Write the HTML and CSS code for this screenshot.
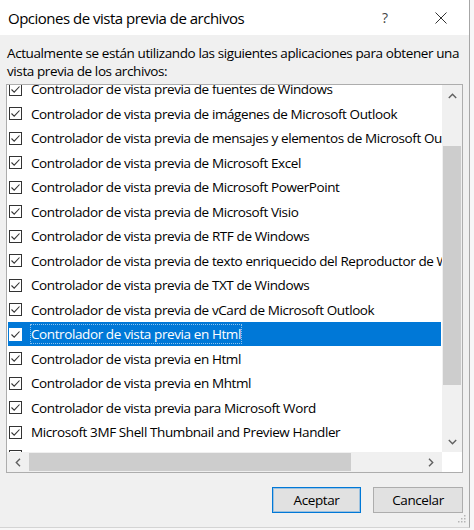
FILE: index.html
```
<!DOCTYPE html>
<html lang="es">
<head>
<meta charset="utf-8">
<title>Opciones de vista previa de archivos</title>
<link rel="stylesheet" href="styles.css">
</head>
<body>
<div class="dialog">
  <div class="titlebar">
    <div class="title">Opciones de vista previa de archivos</div>
    <div class="tb-btn help">?</div>
    <div class="tb-btn close">
      <svg width="12" height="12" viewBox="0 0 12 12"><path d="M0.5 0.5 L11.5 11.5 M11.5 0.5 L0.5 11.5" stroke="#333" stroke-width="1" fill="none"/></svg>
    </div>
  </div>
  <div class="desc">Actualmente se están utilizando las siguientes aplicaciones para obtener una vista previa de los archivos:</div>
  <div class="listbox">
    <div class="viewport">
      <div class="rows">
        <div class="row"><span class="cb"><svg viewBox="0 0 11 11"><path d="M1.5 5.5 L4.2 8.2 L9.5 2.5"/></svg></span><span class="label">Controlador de vista previa de fuentes de Windows</span></div>
        <div class="row"><span class="cb"><svg viewBox="0 0 11 11"><path d="M1.5 5.5 L4.2 8.2 L9.5 2.5"/></svg></span><span class="label">Controlador de vista previa de imágenes de Microsoft Outlook</span></div>
        <div class="row"><span class="cb"><svg viewBox="0 0 11 11"><path d="M1.5 5.5 L4.2 8.2 L9.5 2.5"/></svg></span><span class="label">Controlador de vista previa de mensajes y elementos de Microsoft Outlook</span></div>
        <div class="row"><span class="cb"><svg viewBox="0 0 11 11"><path d="M1.5 5.5 L4.2 8.2 L9.5 2.5"/></svg></span><span class="label">Controlador de vista previa de Microsoft Excel</span></div>
        <div class="row"><span class="cb"><svg viewBox="0 0 11 11"><path d="M1.5 5.5 L4.2 8.2 L9.5 2.5"/></svg></span><span class="label">Controlador de vista previa de Microsoft PowerPoint</span></div>
        <div class="row"><span class="cb"><svg viewBox="0 0 11 11"><path d="M1.5 5.5 L4.2 8.2 L9.5 2.5"/></svg></span><span class="label">Controlador de vista previa de Microsoft Visio</span></div>
        <div class="row"><span class="cb"><svg viewBox="0 0 11 11"><path d="M1.5 5.5 L4.2 8.2 L9.5 2.5"/></svg></span><span class="label">Controlador de vista previa de RTF de Windows</span></div>
        <div class="row"><span class="cb"><svg viewBox="0 0 11 11"><path d="M1.5 5.5 L4.2 8.2 L9.5 2.5"/></svg></span><span class="label">Controlador de vista previa de texto enriquecido del Reproductor de Windows Media</span></div>
        <div class="row"><span class="cb"><svg viewBox="0 0 11 11"><path d="M1.5 5.5 L4.2 8.2 L9.5 2.5"/></svg></span><span class="label">Controlador de vista previa de TXT de Windows</span></div>
        <div class="row"><span class="cb"><svg viewBox="0 0 11 11"><path d="M1.5 5.5 L4.2 8.2 L9.5 2.5"/></svg></span><span class="label">Controlador de vista previa de vCard de Microsoft Outlook</span></div>
        <div class="row selected"><span class="cb"><svg viewBox="0 0 11 11"><path d="M1.5 5.5 L4.2 8.2 L9.5 2.5"/></svg></span><span class="label">Controlador de vista previa en Html</span></div>
        <div class="row"><span class="cb"><svg viewBox="0 0 11 11"><path d="M1.5 5.5 L4.2 8.2 L9.5 2.5"/></svg></span><span class="label">Controlador de vista previa en Html</span></div>
        <div class="row"><span class="cb"><svg viewBox="0 0 11 11"><path d="M1.5 5.5 L4.2 8.2 L9.5 2.5"/></svg></span><span class="label">Controlador de vista previa en Mhtml</span></div>
        <div class="row"><span class="cb"><svg viewBox="0 0 11 11"><path d="M1.5 5.5 L4.2 8.2 L9.5 2.5"/></svg></span><span class="label">Controlador de vista previa para Microsoft Word</span></div>
        <div class="row"><span class="cb"><svg viewBox="0 0 11 11"><path d="M1.5 5.5 L4.2 8.2 L9.5 2.5"/></svg></span><span class="label">Microsoft 3MF Shell Thumbnail and Preview Handler</span></div>
        <div class="row"><span class="cb"><svg viewBox="0 0 11 11"><path d="M1.5 5.5 L4.2 8.2 L9.5 2.5"/></svg></span><span class="label">Microsoft Windows TXT Preview Handler</span></div>
      </div>
    </div>
    <div class="vscroll">
      <div class="sb-btn v"><svg width="9" height="6" viewBox="0 0 9 6"><path d="M0.8 5 L4.5 1.3 L8.2 5" class="chev"/></svg></div>
      <div class="vtrack"><div class="vthumb"></div></div>
      <div class="sb-btn v"><svg width="9" height="6" viewBox="0 0 9 6"><path d="M0.8 1 L4.5 4.7 L8.2 1" class="chev"/></svg></div>
    </div>
    <div class="hscroll">
      <div class="sb-btn h"><svg width="6" height="9" viewBox="0 0 6 9"><path d="M5 0.8 L1.3 4.5 L5 8.2" class="chev"/></svg></div>
      <div class="htrack"><div class="hthumb"></div></div>
      <div class="sb-btn h"><svg width="6" height="9" viewBox="0 0 6 9"><path d="M1 0.8 L4.7 4.5 L1 8.2" class="chev"/></svg></div>
    </div>
    <div class="corner"></div>
  </div>
  <div class="footer">
    <div class="btn default">Aceptar</div>
    <div class="btn">Cancelar</div>
  </div>
  <svg class="grip" width="8" height="8" viewBox="0 0 8 8">
    <rect x="6" y="0" width="1.5" height="1.5"/>
    <rect x="3" y="3" width="1.5" height="1.5"/><rect x="6" y="3" width="1.5" height="1.5"/>
    <rect x="0" y="6" width="1.5" height="1.5"/><rect x="3" y="6" width="1.5" height="1.5"/><rect x="6" y="6" width="1.5" height="1.5"/>
  </svg>
</div>
</body>
</html>
```
FILE: styles.css
```
* { box-sizing: border-box; }
html, body { margin: 0; padding: 0; }
body {
  width: 474px;
  height: 530px;
  overflow: hidden;
  background: #f7f7f7;
  font-family: "Open Sans", "Noto Sans", sans-serif;
  color: #000;
}
.dialog {
  position: relative;
  width: 470px;
  height: 528px;
  background: #f0f0f0;
  border-right: 1px solid #a6a6a6;
  border-bottom: 1px solid #d4d4d4;
  display: flex;
  flex-direction: column;
}
.titlebar {
  height: 35px;
  background: #fff;
  display: flex;
  align-items: center;
  padding-left: 8px;
  padding-right: 5px;
}
.title {
  flex: 1;
  font-size: 15px;
  letter-spacing: -0.5px;
}
.tb-btn {
  width: 46px;
  height: 35px;
  display: flex;
  align-items: center;
  justify-content: center;
}
.help {
  margin-right: 10px;
  font-size: 14px;
  color: #444;
}
.desc {
  margin-top: 9px;
  padding: 0 2px 0 7px;
  font-size: 13.5px;
  line-height: 18px;
  letter-spacing: -0.4px;
}
.listbox {
  margin-top: 4px;
  margin-left: 6px;
  width: 457px;
  height: 389px;
  border: 1px solid #adadad;
  background: #fff;
  display: grid;
  grid-template-columns: 435px 20px;
  grid-template-rows: 367px 20px;
}
.viewport {
  overflow: hidden;
  position: relative;
}
.rows {
  margin-top: -8.25px;
}
.row {
  height: 24.5px;
  margin: 0 1px;
  padding-left: 1px;
  display: flex;
  align-items: center;
  white-space: nowrap;
  font-size: 13.5px;
  letter-spacing: -0.4px;
}
.cb {
  flex: none;
  width: 13px;
  height: 13px;
  border: 1px solid #333;
  background: #fff;
  display: flex;
  align-items: center;
  justify-content: center;
  margin-right: 8px;
}
.cb svg {
  width: 11px;
  height: 11px;
}
.cb path {
  fill: none;
  stroke: #333;
  stroke-width: 1.1;
}
.label {
  padding: 0 1px;
  line-height: 20px;
}
.row.selected {
  background: #0078d7;
  color: #fff;
}
.row.selected .cb {
  border-color: #fff;
}
.row.selected .label {
  outline: 1px dotted rgba(255, 255, 255, 0.55);
  outline-offset: -1px;
}
.vscroll {
  background: #f0f0f0;
  display: flex;
  flex-direction: column;
}
.sb-btn {
  display: flex;
  align-items: center;
  justify-content: center;
  flex: none;
}
.sb-btn.v { height: 21px; }
.sb-btn.h { width: 22px; }
.chev {
  fill: none;
  stroke: #606060;
  stroke-width: 1.4;
}
.vtrack {
  flex: 1;
  padding: 40px 1px 0;
}
.vthumb {
  height: 239px;
  background: #cdcdcd;
}
.hscroll {
  background: #f0f0f0;
  display: flex;
}
.htrack {
  flex: 1;
  padding: 1px 0;
}
.hthumb {
  width: 322px;
  height: 100%;
  background: #cdcdcd;
}
.corner {
  background: #fff;
}
.footer {
  display: flex;
  justify-content: flex-end;
  gap: 12px;
  margin-top: 14px;
  padding-right: 6px;
}
.btn {
  width: 90px;
  height: 26px;
  background: #e1e1e1;
  border: 1px solid #adadad;
  display: flex;
  align-items: center;
  justify-content: center;
  font-size: 13.5px;
  letter-spacing: -0.4px;
}
.btn.default {
  width: 89px;
  border-color: #0078d7;
  box-shadow: inset 0 0 0 1px rgba(0, 120, 215, 0.3);
}
.grip {
  position: absolute;
  right: 3px;
  bottom: 4px;
  fill: #b5b5b5;
}
```
